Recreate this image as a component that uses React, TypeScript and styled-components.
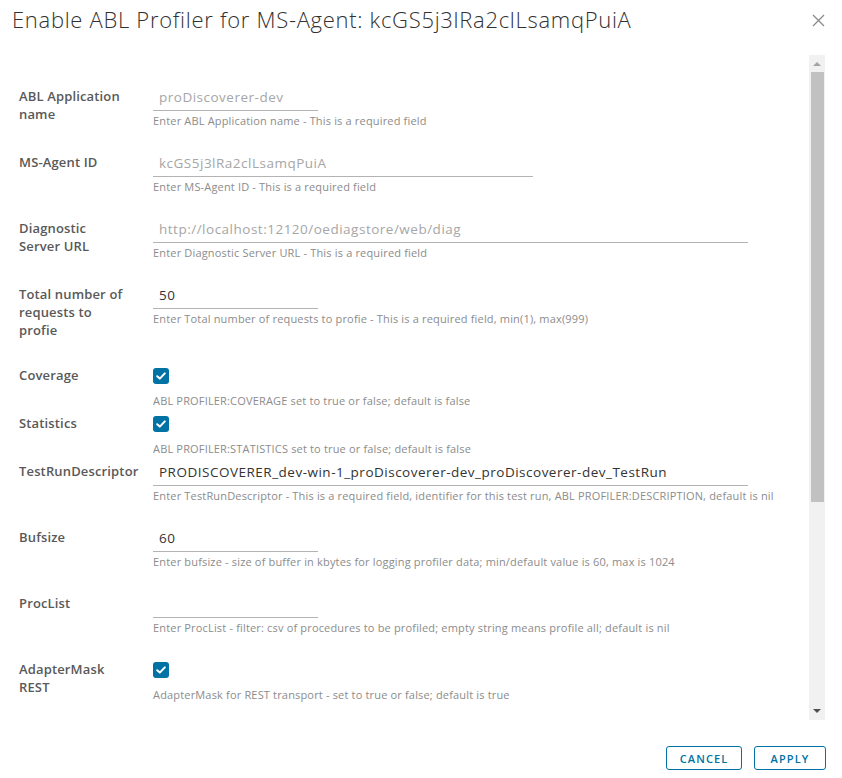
import React from "react";
import styled, { createGlobalStyle } from "styled-components";

const Global = createGlobalStyle`
  html, body { margin: 0; padding: 0; background: #fff; }
  body { font-family: "Open Sans", "Liberation Sans", sans-serif; color: #454545; }
  * { box-sizing: border-box; }
`;

const Dialog = styled.div`
  width: 842px;
  height: 778px;
  display: flex;
  flex-direction: column;
  background: #fff;
`;

const Header = styled.div`
  height: 55px;
  display: flex;
  align-items: flex-start;
  justify-content: space-between;
  padding: 3px 17px 0 12px;
`;

const Title = styled.h3`
  margin: 0;
  font-size: 22px;
  font-weight: 300;
  line-height: 32px;
  color: #313131;
  letter-spacing: 0.7px;
`;

const CloseButton = styled.button`
  border: none;
  background: none;
  padding: 0;
  margin-top: 10px;
  width: 14px;
  height: 14px;
  display: flex;
  align-items: center;
  justify-content: center;
  cursor: pointer;
`;

const Main = styled.div`
  flex: 1;
  min-height: 0;
  display: flex;
  margin: 0 17px 0 12px;
`;

const Body = styled.div`
  flex: 1;
  min-width: 0;
  overflow-y: auto;
  scrollbar-width: none;
  &::-webkit-scrollbar { display: none; }
`;

const ScrollBar = styled.div`
  width: 16px;
  flex: none;
  background: #f1f1f1;
  display: flex;
  flex-direction: column;
`;

const Arrow = styled.div`
  height: 17px;
  flex: none;
  display: flex;
  align-items: center;
  justify-content: center;
`;

const Thumb = styled.div`
  height: 430px;
  margin: 0 1px 0 2px;
  background: #c1c1c1;
  flex: none;
`;

const Spacer = styled.div`
  flex: 1;
`;

const Form = styled.div`
  padding: 32px 0 60px 7px;
  display: flex;
  flex-direction: column;
`;

const Row = styled.div<{ $check?: boolean }>`
  display: flex;
  align-items: flex-start;
  margin-bottom: ${(p) => (p.$check ? "6px" : "25px")};
`;

const Label = styled.label`
  width: 134px;
  flex: none;
  padding: 0 8px 2px 0;
  font-size: 13px;
  font-weight: 600;
  line-height: 18px;
  letter-spacing: 0.15px;
  color: #595959;
`;

const Control = styled.div`
  display: flex;
  flex-direction: column;
  align-items: flex-start;
`;

const TextInput = styled.input<{ $w: number; $muted?: boolean }>`
  width: ${(p) => p.$w}px;
  height: 24px;
  border: none;
  border-bottom: 1px solid #b3b3b3;
  padding: 0 6px 3px;
  font-family: inherit;
  font-size: 13.5px;
  letter-spacing: 0.5px;
  color: ${(p) => (p.$muted ? "#a6a6a6" : "#333")};
  background: transparent;
  outline: none;
`;

const CheckWrap = styled.div`
  height: 20px;
  display: flex;
  align-items: center;
`;

const Box = styled.span`
  width: 16px;
  height: 16px;
  border-radius: 3px;
  background: #0072a3;
  display: flex;
  align-items: center;
  justify-content: center;
`;

const Helper = styled.div<{ $check?: boolean }>`
  margin-top: ${(p) => (p.$check ? "8px" : "3px")};
  font-size: 11px;
  line-height: 14px;
  letter-spacing: 0.17px;
  color: #8c8c8c;
  white-space: nowrap;
`;

const Footer = styled.div`
  height: 58px;
  display: flex;
  justify-content: flex-end;
  align-items: flex-start;
  gap: 12px;
  padding: 26px 16px 0 0;
`;

const Button = styled.button<{ $w: number }>`
  width: ${(p) => p.$w}px;
  height: 24px;
  border: 1px solid #0072a3;
  border-radius: 3px;
  background: #fff;
  color: #0072a3;
  font-family: inherit;
  font-size: 11px;
  font-weight: 600;
  letter-spacing: 0.1em;
  text-transform: uppercase;
  padding: 0;
  cursor: pointer;
`;

const Check = () => (
  <Box>
    <svg width="10" height="8" viewBox="0 0 10 8">
      <polyline points="1.2,4.2 3.8,6.6 8.8,1.4" fill="none" stroke="#fff" strokeWidth="2" strokeLinecap="round" strokeLinejoin="round" />
    </svg>
  </Box>
);

type Field =
  | { kind: "text"; label: React.ReactNode; value: string; width: number; muted?: boolean; help: string }
  | { kind: "check"; label: React.ReactNode; help: string };

const fields: Field[] = [
  { kind: "text", label: <>ABL Application<br />name</>, value: "proDiscoverer-dev", width: 165, muted: true, help: "Enter ABL Application name - This is a required field" },
  { kind: "text", label: "MS-Agent ID", value: "kcGS5j3lRa2clLsamqPuiA", width: 380, muted: true, help: "Enter MS-Agent ID - This is a required field" },
  { kind: "text", label: <>Diagnostic<br />Server URL</>, value: "http://localhost:12120/oediagstore/web/diag", width: 595, muted: true, help: "Enter Diagnostic Server URL - This is a required field" },
  { kind: "text", label: <>Total number of<br />requests to<br />profie</>, value: "50", width: 165, help: "Enter Total number of requests to profie - This is a required field, min(1), max(999)" },
  { kind: "check", label: "Coverage", help: "ABL PROFILER:COVERAGE set to true or false; default is false" },
  { kind: "check", label: "Statistics", help: "ABL PROFILER:STATISTICS set to true or false; default is false" },
  { kind: "text", label: "TestRunDescriptor", value: "PRODISCOVERER_dev-win-1_proDiscoverer-dev_proDiscoverer-dev_TestRun", width: 595, help: "Enter TestRunDescriptor - This is a required field, identifier for this test run, ABL PROFILER:DESCRIPTION, default is nil" },
  { kind: "text", label: "Bufsize", value: "60", width: 165, help: "Enter bufsize - size of buffer in kbytes for logging profiler data; min/default value is 60, max is 1024" },
  { kind: "text", label: "ProcList", value: "", width: 165, help: "Enter ProcList - filter: csv of procedures to be profiled; empty string means profile all; default is nil" },
  { kind: "check", label: <>AdapterMask<br />REST</>, help: "AdapterMask for REST transport - set to true or false; default is true" },
];

export default function App() {
  return (
    <>
      <Global />
      <Dialog>
        <Header>
          <Title>Enable ABL Profiler for MS-Agent: kcGS5j3lRa2clLsamqPuiA</Title>
          <CloseButton aria-label="Close">
            <svg width="13" height="13" viewBox="0 0 13 13">
              <path d="M1 1L12 12M12 1L1 12" stroke="#8a8a8a" strokeWidth="1.3" />
            </svg>
          </CloseButton>
        </Header>
        <Main>
          <Body>
            <Form>
              {fields.map((f, i) =>
                f.kind === "text" ? (
                  <Row key={i}>
                    <Label>{f.label}</Label>
                    <Control>
                      <TextInput $w={f.width} $muted={f.muted} value={f.value} readOnly />
                      <Helper>{f.help}</Helper>
                    </Control>
                  </Row>
                ) : (
                  <Row key={i} $check>
                    <Label>{f.label}</Label>
                    <Control>
                      <CheckWrap>
                        <Check />
                      </CheckWrap>
                      <Helper $check>{f.help}</Helper>
                    </Control>
                  </Row>
                )
              )}
            </Form>
          </Body>
          <ScrollBar aria-hidden>
            <Arrow>
              <svg width="8" height="5" viewBox="0 0 8 5">
                <path d="M0 5L4 1L8 5Z" fill="#a3a3a3" />
              </svg>
            </Arrow>
            <Thumb />
            <Spacer />
            <Arrow>
              <svg width="8" height="5" viewBox="0 0 8 5">
                <path d="M0 0L8 0L4 4Z" fill="#505050" />
              </svg>
            </Arrow>
          </ScrollBar>
        </Main>
        <Footer>
          <Button $w={76}>Cancel</Button>
          <Button $w={72}>Apply</Button>
        </Footer>
      </Dialog>
    </>
  );
}
